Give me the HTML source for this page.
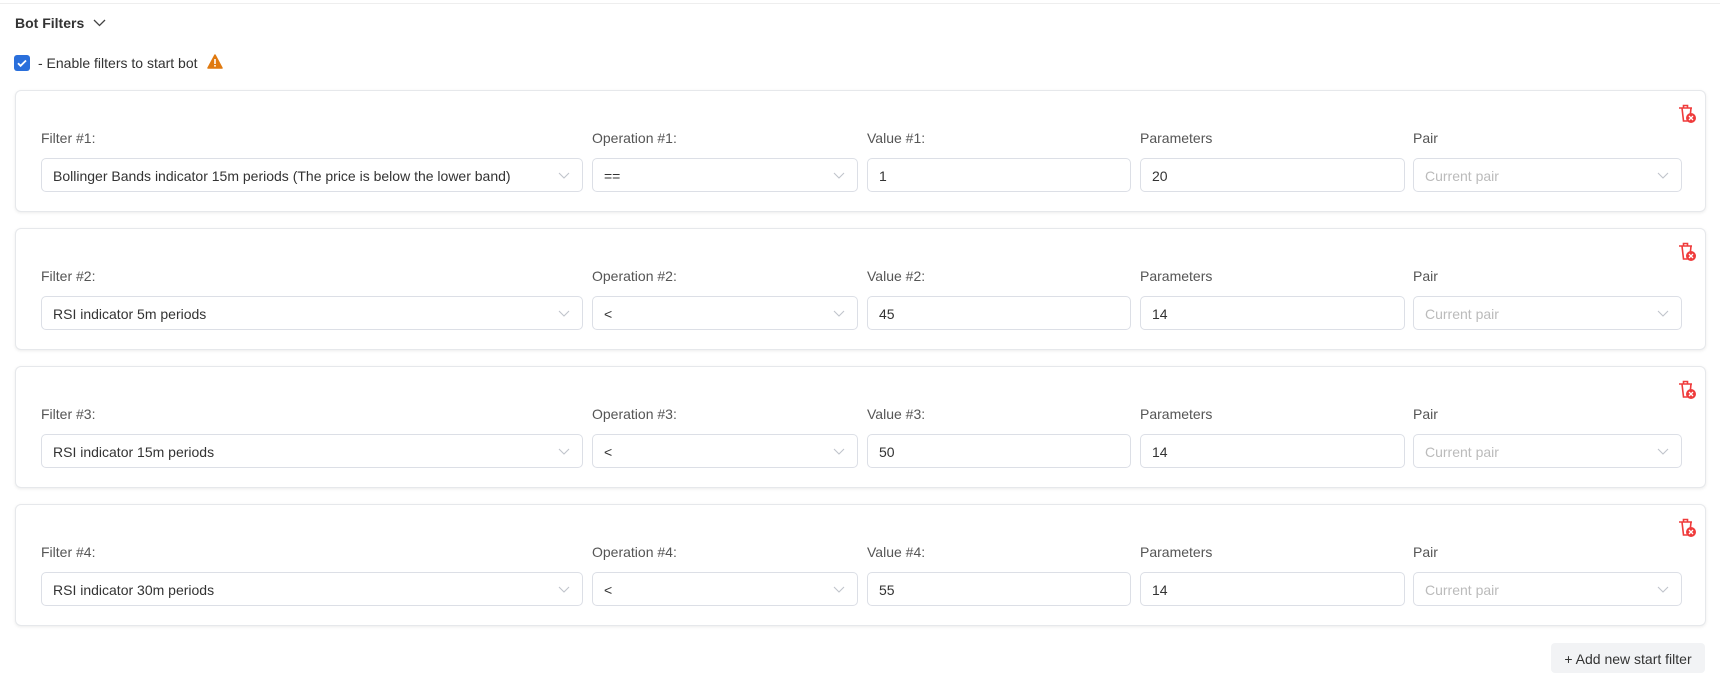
<!DOCTYPE html>
<html><head><style>
*{box-sizing:border-box;margin:0;padding:0}
body{width:1720px;height:667px;overflow:hidden;background:#fff;font-family:"Liberation Sans",sans-serif;color:#606266;position:relative}
.top{position:absolute;left:0;top:0;width:1720px;height:4px;border-bottom:1px solid #eee}
.title{position:absolute;left:15px;top:15px;font-size:14px;font-weight:bold;color:#333}
.title svg{position:absolute;left:78px;top:4px}
.cb{position:absolute;left:14px;top:55px;width:16px;height:16px;border-radius:3px;background:#2a6fdb}
.en{position:absolute;left:38px;top:55px;font-size:14px;color:#333}
.warn{position:absolute;left:207px;top:54px}
.card{position:absolute;left:15px;width:1691px;height:122px;border:1px solid #e6e8eb;border-radius:6px;box-shadow:0 1px 3px rgba(0,0,0,.08);background:#fff}
.lbl{position:absolute;top:39px;font-size:14px;color:#555}
.in{position:absolute;top:67px;height:34px;border:1px solid #dcdfe6;border-radius:5px;font-size:14px;color:#333;padding:9px 11px}
.in.ph{color:#bbb}
.in svg{position:absolute;right:12px;top:13px}
.trash{position:absolute;left:1659px;top:11px}
.btn{position:absolute;left:1551px;top:643px;width:154px;height:30px;background:#f2f3f5;border-radius:4px;font-size:14px;color:#333;text-align:center;padding-top:8px}
</style></head><body>
<div class="top"></div>
<div class="title">Bot Filters<svg width="13" height="8" viewBox="0 0 13 8"><path d="M1 1l5.5 5.5L12 1" fill="none" stroke="#444" stroke-width="1.3"/></svg></div>
<div class="cb"><svg width="16" height="16" viewBox="0 0 16 16"><path d="M4 8.2l2.6 2.6L12 5.5" fill="none" stroke="#fff" stroke-width="1.8"/></svg></div>
<div class="en">- Enable filters to start bot</div>
<svg class="warn" width="16" height="15" viewBox="0 0 16 15"><path d="M8 1L15 14H1z" fill="#e07a10" stroke="#e07a10" stroke-linejoin="round" stroke-width="1.5"/><rect x="7.2" y="5" width="1.6" height="5" fill="#fff"/><rect x="7.2" y="11" width="1.6" height="1.6" fill="#fff"/></svg>

<!-- cards -->
<script>
const rows=[["Bollinger Bands indicator 15m periods (The price is below the lower band)","==","1","20"],["RSI indicator 5m periods","<","45","14"],["RSI indicator 15m periods","<","50","14"],["RSI indicator 30m periods","<","55","14"]];
const ch='<svg width="12" height="7" viewBox="0 0 12 7"><path d="M1 1l5 5 5-5" fill="none" stroke="#c0c4cc" stroke-width="1.1"/></svg>';
const tr='<svg class="trash" width="22" height="22" viewBox="0 0 22 22"><path d="M4 6h13M7 6l1.5 13h4M16 6l-0.6 6M8.5 6V3.5h4V6" fill="none" stroke="#ef3b3b" stroke-width="1.6"/><circle cx="16" cy="16" r="5" fill="#ef3b3b"/><path d="M14 14l4 4M18 14l-4 4" stroke="#fff" stroke-width="1.3"/></svg>';
rows.forEach((r,i)=>{const n=i+1;const t=90+i*138;
document.write(`<div class="card" style="top:${t}px">${tr}
<div class="lbl" style="left:25px">Filter #${n}:</div>
<div class="lbl" style="left:576px">Operation #${n}:</div>
<div class="lbl" style="left:851px">Value #${n}:</div>
<div class="lbl" style="left:1124px">Parameters</div>
<div class="lbl" style="left:1397px">Pair</div>
<div class="in" style="left:25px;width:542px">${r[0]}${ch}</div>
<div class="in" style="left:576px;width:266px">${r[1].replace('<','&lt;')}${ch}</div>
<div class="in" style="left:851px;width:264px">${r[2]}</div>
<div class="in" style="left:1124px;width:265px">${r[3]}</div>
<div class="in ph" style="left:1397px;width:269px">Current pair${ch}</div>
</div>`)});
</script>
<div class="btn">+ Add new start filter</div>
</body></html>
